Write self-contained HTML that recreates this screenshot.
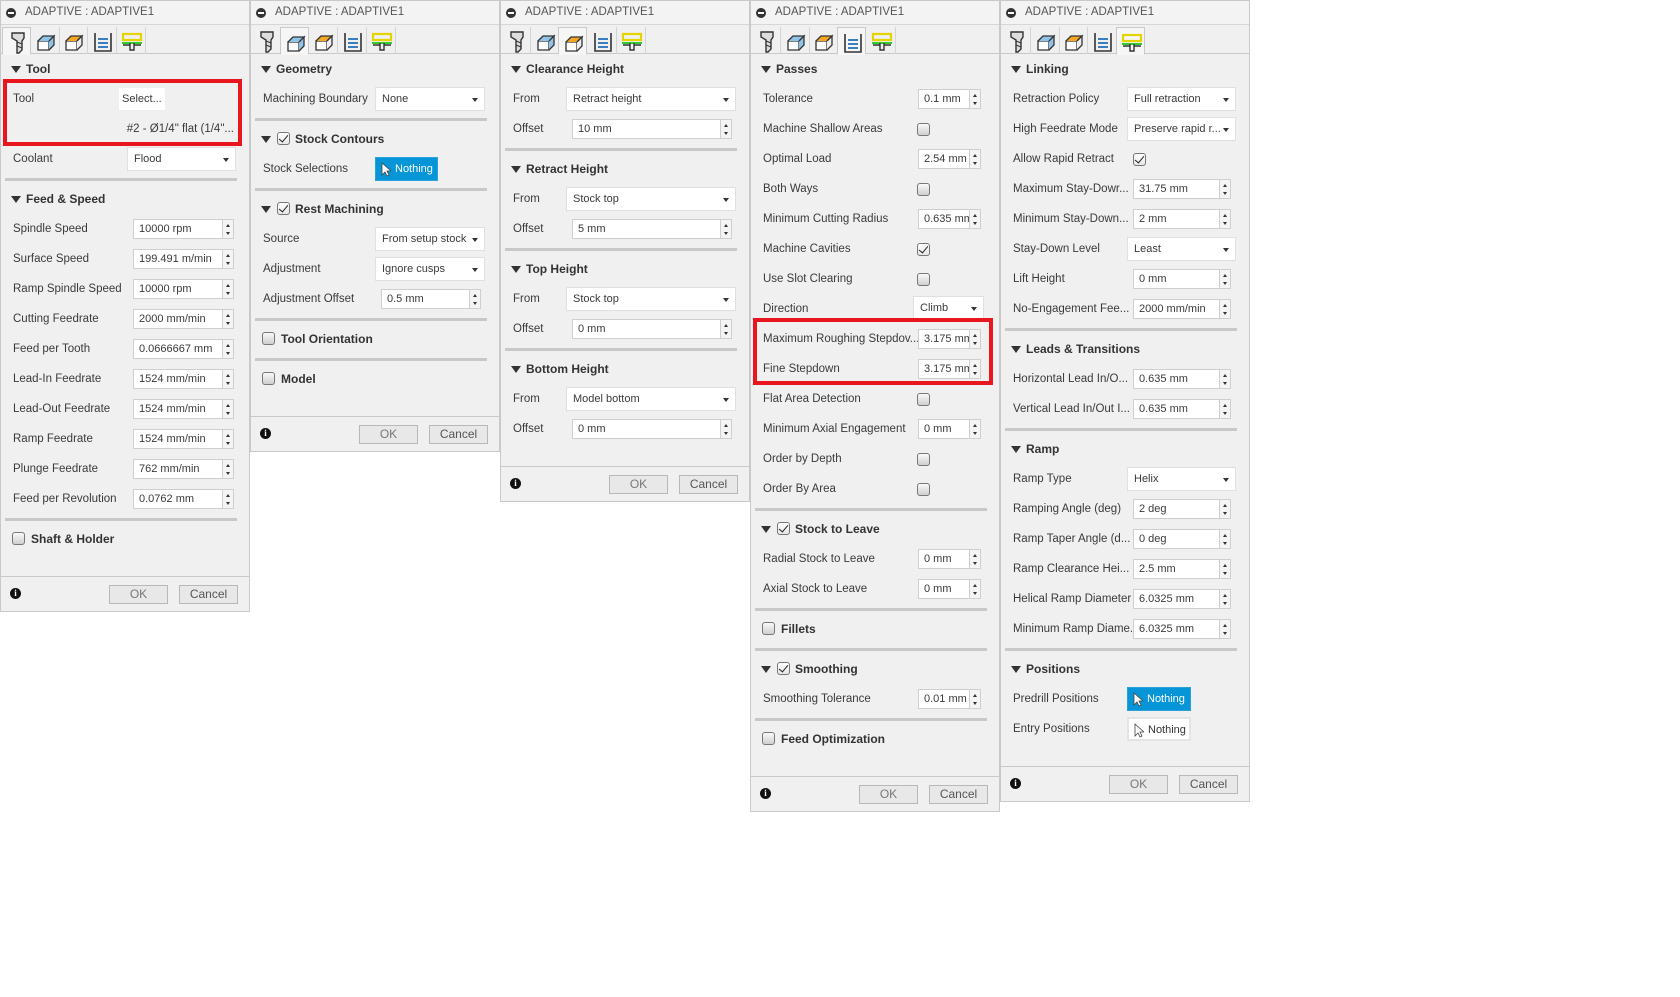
<!DOCTYPE html>
<html><head><meta charset="utf-8">
<style>
*{box-sizing:border-box;margin:0;padding:0}
body{width:1680px;height:997px;background:#fff;font-family:"Liberation Sans",Arial,sans-serif;font-size:11.5px;color:#3a3a3a;position:relative;overflow:hidden}
.p{position:absolute;top:0;width:250px;background:#f0f0f0;border:1px solid #c9c9c9}
.tb{height:24px;position:relative;border-bottom:1px solid #d6d6d6;background:#f3f3f3;color:#555;font-size:11.5px;line-height:23px;padding-left:24px}
.tb:before{content:"";position:absolute;left:5px;top:7px;width:10px;height:10px;border-radius:50%;background:#333}
.tb:after{content:"";position:absolute;left:7px;top:11px;width:6px;height:2px;background:#fff}
.tabs{height:29px;border-bottom:1px solid #c9c9c9;position:relative;background:#f0f0f0}
.tab{position:absolute;top:2px;width:29px;height:27px;border-right:1px solid #d4d4d4}
.tab.a{background:#f6f6f6;border:1px solid #c9c9c9;border-bottom:1px solid #f6f6f6;height:28px}
.tab svg{position:absolute;left:4px;top:3px}
.body{position:relative}
.h{height:30px;position:relative;font-weight:bold;font-size:12px;color:#333;line-height:30px;padding-left:25px}
.h:before{content:"";position:absolute;left:10px;top:12px;border-left:5px solid transparent;border-right:5px solid transparent;border-top:7px solid #333}
.h.cb{padding-left:44px}
.h.cb .ck{left:26px;top:8px}
.h.nc{padding-left:30px}
.h.nc:before{display:none}
.h.nc .ck{left:11px;top:8px}
.sep{height:10px;position:relative}
.sep:after{content:"";position:absolute;left:4px;right:12px;top:4px;height:3px;background:#c8c8c8}
.r{height:30px;position:relative;line-height:30px;padding-left:12px;white-space:nowrap}
.in{position:absolute;top:5px;height:20px;background:#fff;border:1px solid #cfcfcf;line-height:18px;padding-left:5px;font-size:11px;overflow:hidden}
.in i{position:absolute;right:-1px;top:-1px;width:12px;height:20px;border:1px solid #cfcfcf;background:#f4f4f4}
.in i:before{content:"";position:absolute;left:3px;top:4px;border-left:2px solid transparent;border-right:2px solid transparent;border-bottom:3px solid #333}
.in i:after{content:"";position:absolute;left:3px;top:12px;border-left:2px solid transparent;border-right:2px solid transparent;border-top:3px solid #333}
.sel{position:absolute;top:3px;height:24px;background:#fff;border:1px solid #e0e0e0;line-height:22px;padding-left:6px;font-size:11px}
.sel:after{content:"";position:absolute;right:6px;top:10px;border-left:3px solid transparent;border-right:3px solid transparent;border-top:4px solid #333}
.sel.nod:after{display:none}
.ck{position:absolute;top:9px;width:13px;height:13px;border:1px solid #777;border-radius:3px;background:linear-gradient(#fafafa,#cfcfcf)}
.ck.on:after{content:"";position:absolute;left:3px;top:0px;width:4px;height:8px;border-right:1.5px solid #222;border-bottom:1.5px solid #222;transform:rotate(40deg)}
.ck.on{background:linear-gradient(#fff,#e6e6e6)}
.nb{position:absolute;top:3px;height:24px;background:#0696d7;color:#fff;line-height:22px;padding-left:19px;font-size:11px;border:1px solid #2aa0dc}
.nb.w{background:#fff;color:#333;border:2px solid #e4e4e4}
.nb svg{position:absolute;left:5px;top:4px}
.ft{margin-top:22px;height:35px;border-top:1px solid #c9c9c9;position:relative}
.ft .inf{position:absolute;left:9px;top:11px;width:11px;height:11px;border-radius:50%;background:#111;color:#fff;font-weight:bold;font-size:9px;line-height:11px;text-align:center;font-family:"Liberation Serif",serif}
.bt{position:absolute;top:8px;width:59px;height:19px;border:1px solid #b8b8b8;background:#e8e8e8;text-align:center;line-height:17px;font-size:12px;color:#777}
.bt.c{color:#555}
.red{position:absolute;border:4px solid #e8171f}
</style></head><body>

<!-- PANEL 1 -->
<div class="p" style="left:0">
<div class="tb">ADAPTIVE : ADAPTIVE1</div>
<div class="tabs">
 <div class="tab a" style="left:1px"><svg width="22" height="24"><path d="M5 2h12v5l-2 3v9l-3 3h-2V10L5 7z" fill="#ddd" stroke="#333" stroke-width="1.4"/><path d="M10 11l5 2M10 15l5 2" stroke="#333"/></svg></div>
 <div class="tab" style="left:30px"><svg width="22" height="24"><path d="M3 11h11v9H3z" fill="#fff" stroke="#333" stroke-width="1.3"/><path d="M3 11l5-5h11l-5 5M14 11l5-5v9l-5 5" fill="#8fc3e8" stroke="#333" stroke-width="1.3"/></svg></div>
 <div class="tab" style="left:58px"><svg width="22" height="24"><path d="M3 11h11v9H3z" fill="#fff" stroke="#333" stroke-width="1.3"/><path d="M3 11l5-5h11l-5 5" fill="#f5a623" stroke="#333" stroke-width="1.3"/><path d="M14 11l5-5v9l-5 5" fill="#eee" stroke="#333" stroke-width="1.3"/></svg></div>
 <div class="tab" style="left:87px"><svg width="22" height="24"><path d="M3 3v18h16V3" fill="none" stroke="#333" stroke-width="1.6"/><path d="M6 9h10M6 13h10M6 17h10" stroke="#3a7dc0" stroke-width="2"/></svg></div>
 <div class="tab" style="left:116px"><svg width="22" height="24"><path d="M2 4h18v6H2z" fill="none" stroke="#e6d400" stroke-width="2.2"/><path d="M1 13h20" stroke="#3c3" stroke-width="2"/><path d="M2 15h7v5h4v-5h7M9 15v-2M13 15v-2" fill="none" stroke="#333" stroke-width="1.4"/></svg></div>
</div>
<div class="body">
 <div class="h">Tool</div>
 <div class="r">Tool<span class="sel nod" style="left:117px;width:48px;padding-left:3px;border:1px solid #eee">Select...</span></div>
 <div class="r" style="text-align:right;padding-right:15px">#2 - Ø1/4" flat (1/4"...</div>
 <div class="r">Coolant<span class="sel" style="left:126px;width:109px">Flood</span></div>
 <div class="sep"></div>
 <div class="h">Feed &amp; Speed</div>
 <div class="r">Spindle Speed<span class="in" style="left:132px;width:101px">10000 rpm<i></i></span></div>
 <div class="r">Surface Speed<span class="in" style="left:132px;width:101px">199.491 m/min<i></i></span></div>
 <div class="r">Ramp Spindle Speed<span class="in" style="left:132px;width:101px">10000 rpm<i></i></span></div>
 <div class="r">Cutting Feedrate<span class="in" style="left:132px;width:101px">2000 mm/min<i></i></span></div>
 <div class="r">Feed per Tooth<span class="in" style="left:132px;width:101px">0.0666667 mm<i></i></span></div>
 <div class="r">Lead-In Feedrate<span class="in" style="left:132px;width:101px">1524 mm/min<i></i></span></div>
 <div class="r">Lead-Out Feedrate<span class="in" style="left:132px;width:101px">1524 mm/min<i></i></span></div>
 <div class="r">Ramp Feedrate<span class="in" style="left:132px;width:101px">1524 mm/min<i></i></span></div>
 <div class="r">Plunge Feedrate<span class="in" style="left:132px;width:101px">762 mm/min<i></i></span></div>
 <div class="r">Feed per Revolution<span class="in" style="left:132px;width:101px">0.0762 mm<i></i></span></div>
 <div class="sep"></div>
 <div class="h nc"><span class="ck"></span>Shaft &amp; Holder</div>
 <div class="ft"><span class="inf">i</span><span class="bt" style="left:108px">OK</span><span class="bt c" style="left:178px">Cancel</span></div>
</div>
</div>
<div class="red" style="left:3px;top:79px;width:239px;height:67px"></div>

<!-- PANEL 2 -->
<div class="p" style="left:250px">
<div class="tb">ADAPTIVE : ADAPTIVE1</div>
<div class="tabs">
 <div class="tab" style="left:1px"><svg width="22" height="24"><path d="M5 2h12v5l-2 3v9l-3 3h-2V10L5 7z" fill="#ddd" stroke="#333" stroke-width="1.4"/><path d="M10 11l5 2M10 15l5 2" stroke="#333"/></svg></div>
 <div class="tab a" style="left:29px"><svg width="22" height="24"><path d="M3 11h11v9H3z" fill="#fff" stroke="#333" stroke-width="1.3"/><path d="M3 11l5-5h11l-5 5M14 11l5-5v9l-5 5" fill="#8fc3e8" stroke="#333" stroke-width="1.3"/></svg></div>
 <div class="tab" style="left:58px"><svg width="22" height="24"><path d="M3 11h11v9H3z" fill="#fff" stroke="#333" stroke-width="1.3"/><path d="M3 11l5-5h11l-5 5" fill="#f5a623" stroke="#333" stroke-width="1.3"/><path d="M14 11l5-5v9l-5 5" fill="#eee" stroke="#333" stroke-width="1.3"/></svg></div>
 <div class="tab" style="left:87px"><svg width="22" height="24"><path d="M3 3v18h16V3" fill="none" stroke="#333" stroke-width="1.6"/><path d="M6 9h10M6 13h10M6 17h10" stroke="#3a7dc0" stroke-width="2"/></svg></div>
 <div class="tab" style="left:116px"><svg width="22" height="24"><path d="M2 4h18v6H2z" fill="none" stroke="#e6d400" stroke-width="2.2"/><path d="M1 13h20" stroke="#3c3" stroke-width="2"/><path d="M2 15h7v5h4v-5h7M9 15v-2M13 15v-2" fill="none" stroke="#333" stroke-width="1.4"/></svg></div>
</div>
<div class="body">
 <div class="h">Geometry</div>
 <div class="r">Machining Boundary<span class="sel" style="left:124px;width:110px">None</span></div>
 <div class="sep"></div>
 <div class="h cb"><span class="ck on"></span>Stock Contours</div>
 <div class="r">Stock Selections<span class="nb" style="left:124px;width:63px"><svg width="10" height="15"><path d="M1 1v12l3-3 2 4 2-1-2-4h4z" fill="#fff" stroke="#444" stroke-width=".8"/></svg>Nothing</span></div>
 <div class="sep"></div>
 <div class="h cb"><span class="ck on"></span>Rest Machining</div>
 <div class="r">Source<span class="sel" style="left:124px;width:110px">From setup stock</span></div>
 <div class="r">Adjustment<span class="sel" style="left:124px;width:110px">Ignore cusps</span></div>
 <div class="r">Adjustment Offset<span class="in" style="left:130px;width:100px">0.5 mm<i></i></span></div>
 <div class="sep"></div>
 <div class="h nc"><span class="ck"></span>Tool Orientation</div>
 <div class="sep"></div>
 <div class="h nc"><span class="ck"></span>Model</div>
 <div class="ft"><span class="inf">i</span><span class="bt" style="left:108px">OK</span><span class="bt c" style="left:178px">Cancel</span></div>
</div>
</div>

<!-- PANEL 3 -->
<div class="p" style="left:500px">
<div class="tb">ADAPTIVE : ADAPTIVE1</div>
<div class="tabs">
 <div class="tab" style="left:1px"><svg width="22" height="24"><path d="M5 2h12v5l-2 3v9l-3 3h-2V10L5 7z" fill="#ddd" stroke="#333" stroke-width="1.4"/><path d="M10 11l5 2M10 15l5 2" stroke="#333"/></svg></div>
 <div class="tab" style="left:30px"><svg width="22" height="24"><path d="M3 11h11v9H3z" fill="#fff" stroke="#333" stroke-width="1.3"/><path d="M3 11l5-5h11l-5 5M14 11l5-5v9l-5 5" fill="#8fc3e8" stroke="#333" stroke-width="1.3"/></svg></div>
 <div class="tab a" style="left:57px"><svg width="22" height="24"><path d="M3 11h11v9H3z" fill="#fff" stroke="#333" stroke-width="1.3"/><path d="M3 11l5-5h11l-5 5" fill="#f5a623" stroke="#333" stroke-width="1.3"/><path d="M14 11l5-5v9l-5 5" fill="#eee" stroke="#333" stroke-width="1.3"/></svg></div>
 <div class="tab" style="left:87px"><svg width="22" height="24"><path d="M3 3v18h16V3" fill="none" stroke="#333" stroke-width="1.6"/><path d="M6 9h10M6 13h10M6 17h10" stroke="#3a7dc0" stroke-width="2"/></svg></div>
 <div class="tab" style="left:116px"><svg width="22" height="24"><path d="M2 4h18v6H2z" fill="none" stroke="#e6d400" stroke-width="2.2"/><path d="M1 13h20" stroke="#3c3" stroke-width="2"/><path d="M2 15h7v5h4v-5h7M9 15v-2M13 15v-2" fill="none" stroke="#333" stroke-width="1.4"/></svg></div>
</div>
<div class="body">
 <div class="h">Clearance Height</div>
 <div class="r">From<span class="sel" style="left:65px;width:170px">Retract height</span></div>
 <div class="r">Offset<span class="in" style="left:71px;width:160px">10 mm<i></i></span></div>
 <div class="sep"></div>
 <div class="h">Retract Height</div>
 <div class="r">From<span class="sel" style="left:65px;width:170px">Stock top</span></div>
 <div class="r">Offset<span class="in" style="left:71px;width:160px">5 mm<i></i></span></div>
 <div class="sep"></div>
 <div class="h">Top Height</div>
 <div class="r">From<span class="sel" style="left:65px;width:170px">Stock top</span></div>
 <div class="r">Offset<span class="in" style="left:71px;width:160px">0 mm<i></i></span></div>
 <div class="sep"></div>
 <div class="h">Bottom Height</div>
 <div class="r">From<span class="sel" style="left:65px;width:170px">Model bottom</span></div>
 <div class="r">Offset<span class="in" style="left:71px;width:160px">0 mm<i></i></span></div>
 <div class="ft"><span class="inf">i</span><span class="bt" style="left:108px">OK</span><span class="bt c" style="left:178px">Cancel</span></div>
</div>
</div>

<!-- PANEL 4 -->
<div class="p" style="left:750px">
<div class="tb">ADAPTIVE : ADAPTIVE1</div>
<div class="tabs">
 <div class="tab" style="left:1px"><svg width="22" height="24"><path d="M5 2h12v5l-2 3v9l-3 3h-2V10L5 7z" fill="#ddd" stroke="#333" stroke-width="1.4"/><path d="M10 11l5 2M10 15l5 2" stroke="#333"/></svg></div>
 <div class="tab" style="left:30px"><svg width="22" height="24"><path d="M3 11h11v9H3z" fill="#fff" stroke="#333" stroke-width="1.3"/><path d="M3 11l5-5h11l-5 5M14 11l5-5v9l-5 5" fill="#8fc3e8" stroke="#333" stroke-width="1.3"/></svg></div>
 <div class="tab" style="left:58px"><svg width="22" height="24"><path d="M3 11h11v9H3z" fill="#fff" stroke="#333" stroke-width="1.3"/><path d="M3 11l5-5h11l-5 5" fill="#f5a623" stroke="#333" stroke-width="1.3"/><path d="M14 11l5-5v9l-5 5" fill="#eee" stroke="#333" stroke-width="1.3"/></svg></div>
 <div class="tab a" style="left:86px"><svg width="22" height="24"><path d="M3 3v18h16V3" fill="none" stroke="#333" stroke-width="1.6"/><path d="M6 9h10M6 13h10M6 17h10" stroke="#3a7dc0" stroke-width="2"/></svg></div>
 <div class="tab" style="left:116px"><svg width="22" height="24"><path d="M2 4h18v6H2z" fill="none" stroke="#e6d400" stroke-width="2.2"/><path d="M1 13h20" stroke="#3c3" stroke-width="2"/><path d="M2 15h7v5h4v-5h7M9 15v-2M13 15v-2" fill="none" stroke="#333" stroke-width="1.4"/></svg></div>
</div>
<div class="body">
 <div class="h">Passes</div>
 <div class="r">Tolerance<span class="in" style="left:167px;width:63px">0.1 mm<i></i></span></div>
 <div class="r">Machine Shallow Areas<span class="ck" style="left:166px"></span></div>
 <div class="r">Optimal Load<span class="in" style="left:167px;width:63px">2.54 mm<i></i></span></div>
 <div class="r">Both Ways<span class="ck" style="left:166px"></span></div>
 <div class="r">Minimum Cutting Radius<span class="in" style="left:167px;width:63px">0.635 mm<i></i></span></div>
 <div class="r">Machine Cavities<span class="ck on" style="left:166px"></span></div>
 <div class="r">Use Slot Clearing<span class="ck" style="left:166px"></span></div>
 <div class="r">Direction<span class="sel" style="left:162px;width:71px;top:2px">Climb</span></div>
 <div class="r">Maximum Roughing Stepdov...<span class="in" style="left:167px;width:63px">3.175 mm<i></i></span></div>
 <div class="r">Fine Stepdown<span class="in" style="left:167px;width:63px">3.175 mm<i></i></span></div>
 <div class="r">Flat Area Detection<span class="ck" style="left:166px"></span></div>
 <div class="r">Minimum Axial Engagement<span class="in" style="left:167px;width:63px">0 mm<i></i></span></div>
 <div class="r">Order by Depth<span class="ck" style="left:166px"></span></div>
 <div class="r">Order By Area<span class="ck" style="left:166px"></span></div>
 <div class="sep"></div>
 <div class="h cb"><span class="ck on"></span>Stock to Leave</div>
 <div class="r">Radial Stock to Leave<span class="in" style="left:167px;width:63px">0 mm<i></i></span></div>
 <div class="r">Axial Stock to Leave<span class="in" style="left:167px;width:63px">0 mm<i></i></span></div>
 <div class="sep"></div>
 <div class="h nc"><span class="ck"></span>Fillets</div>
 <div class="sep"></div>
 <div class="h cb"><span class="ck on"></span>Smoothing</div>
 <div class="r">Smoothing Tolerance<span class="in" style="left:167px;width:63px">0.01 mm<i></i></span></div>
 <div class="sep"></div>
 <div class="h nc"><span class="ck"></span>Feed Optimization</div>
 <div class="ft"><span class="inf">i</span><span class="bt" style="left:108px">OK</span><span class="bt c" style="left:178px">Cancel</span></div>
</div>
</div>
<div class="red" style="left:753px;top:318px;width:240px;height:67px"></div>

<!-- PANEL 5 -->
<div class="p" style="left:1000px">
<div class="tb">ADAPTIVE : ADAPTIVE1</div>
<div class="tabs">
 <div class="tab" style="left:1px"><svg width="22" height="24"><path d="M5 2h12v5l-2 3v9l-3 3h-2V10L5 7z" fill="#ddd" stroke="#333" stroke-width="1.4"/><path d="M10 11l5 2M10 15l5 2" stroke="#333"/></svg></div>
 <div class="tab" style="left:30px"><svg width="22" height="24"><path d="M3 11h11v9H3z" fill="#fff" stroke="#333" stroke-width="1.3"/><path d="M3 11l5-5h11l-5 5M14 11l5-5v9l-5 5" fill="#8fc3e8" stroke="#333" stroke-width="1.3"/></svg></div>
 <div class="tab" style="left:58px"><svg width="22" height="24"><path d="M3 11h11v9H3z" fill="#fff" stroke="#333" stroke-width="1.3"/><path d="M3 11l5-5h11l-5 5" fill="#f5a623" stroke="#333" stroke-width="1.3"/><path d="M14 11l5-5v9l-5 5" fill="#eee" stroke="#333" stroke-width="1.3"/></svg></div>
 <div class="tab" style="left:87px"><svg width="22" height="24"><path d="M3 3v18h16V3" fill="none" stroke="#333" stroke-width="1.6"/><path d="M6 9h10M6 13h10M6 17h10" stroke="#3a7dc0" stroke-width="2"/></svg></div>
 <div class="tab a" style="left:115px"><svg width="22" height="24"><path d="M2 4h18v6H2z" fill="none" stroke="#e6d400" stroke-width="2.2"/><path d="M1 13h20" stroke="#3c3" stroke-width="2"/><path d="M2 15h7v5h4v-5h7M9 15v-2M13 15v-2" fill="none" stroke="#333" stroke-width="1.4"/></svg></div>
</div>
<div class="body">
 <div class="h">Linking</div>
 <div class="r">Retraction Policy<span class="sel" style="left:126px;width:109px">Full retraction</span></div>
 <div class="r">High Feedrate Mode<span class="sel" style="left:126px;width:109px">Preserve rapid r...</span></div>
 <div class="r">Allow Rapid Retract<span class="ck on" style="left:132px"></span></div>
 <div class="r">Maximum Stay-Dowr...<span class="in" style="left:132px;width:98px">31.75 mm<i></i></span></div>
 <div class="r">Minimum Stay-Down...<span class="in" style="left:132px;width:98px">2 mm<i></i></span></div>
 <div class="r">Stay-Down Level<span class="sel" style="left:126px;width:109px">Least</span></div>
 <div class="r">Lift Height<span class="in" style="left:132px;width:98px">0 mm<i></i></span></div>
 <div class="r">No-Engagement Fee...<span class="in" style="left:132px;width:98px">2000 mm/min<i></i></span></div>
 <div class="sep"></div>
 <div class="h">Leads &amp; Transitions</div>
 <div class="r">Horizontal Lead In/O...<span class="in" style="left:132px;width:98px">0.635 mm<i></i></span></div>
 <div class="r">Vertical Lead In/Out I...<span class="in" style="left:132px;width:98px">0.635 mm<i></i></span></div>
 <div class="sep"></div>
 <div class="h">Ramp</div>
 <div class="r">Ramp Type<span class="sel" style="left:126px;width:109px">Helix</span></div>
 <div class="r">Ramping Angle (deg)<span class="in" style="left:132px;width:98px">2 deg<i></i></span></div>
 <div class="r">Ramp Taper Angle (d...<span class="in" style="left:132px;width:98px">0 deg<i></i></span></div>
 <div class="r">Ramp Clearance Hei...<span class="in" style="left:132px;width:98px">2.5 mm<i></i></span></div>
 <div class="r">Helical Ramp Diameter<span class="in" style="left:132px;width:98px">6.0325 mm<i></i></span></div>
 <div class="r">Minimum Ramp Diame...<span class="in" style="left:132px;width:98px">6.0325 mm<i></i></span></div>
 <div class="sep"></div>
 <div class="h">Positions</div>
 <div class="r">Predrill Positions<span class="nb" style="left:126px;width:64px"><svg width="10" height="15"><path d="M1 1v12l3-3 2 4 2-1-2-4h4z" fill="#fff" stroke="#444" stroke-width=".8"/></svg>Nothing</span></div>
 <div class="r">Entry Positions<span class="nb w" style="left:126px;width:64px"><svg width="10" height="15"><path d="M1 1v12l3-3 2 4 2-1-2-4h4z" fill="#fff" stroke="#444" stroke-width=".8"/></svg>Nothing</span></div>
 <div class="ft"><span class="inf">i</span><span class="bt" style="left:108px">OK</span><span class="bt c" style="left:178px">Cancel</span></div>
</div>
</div>
</body></html>
